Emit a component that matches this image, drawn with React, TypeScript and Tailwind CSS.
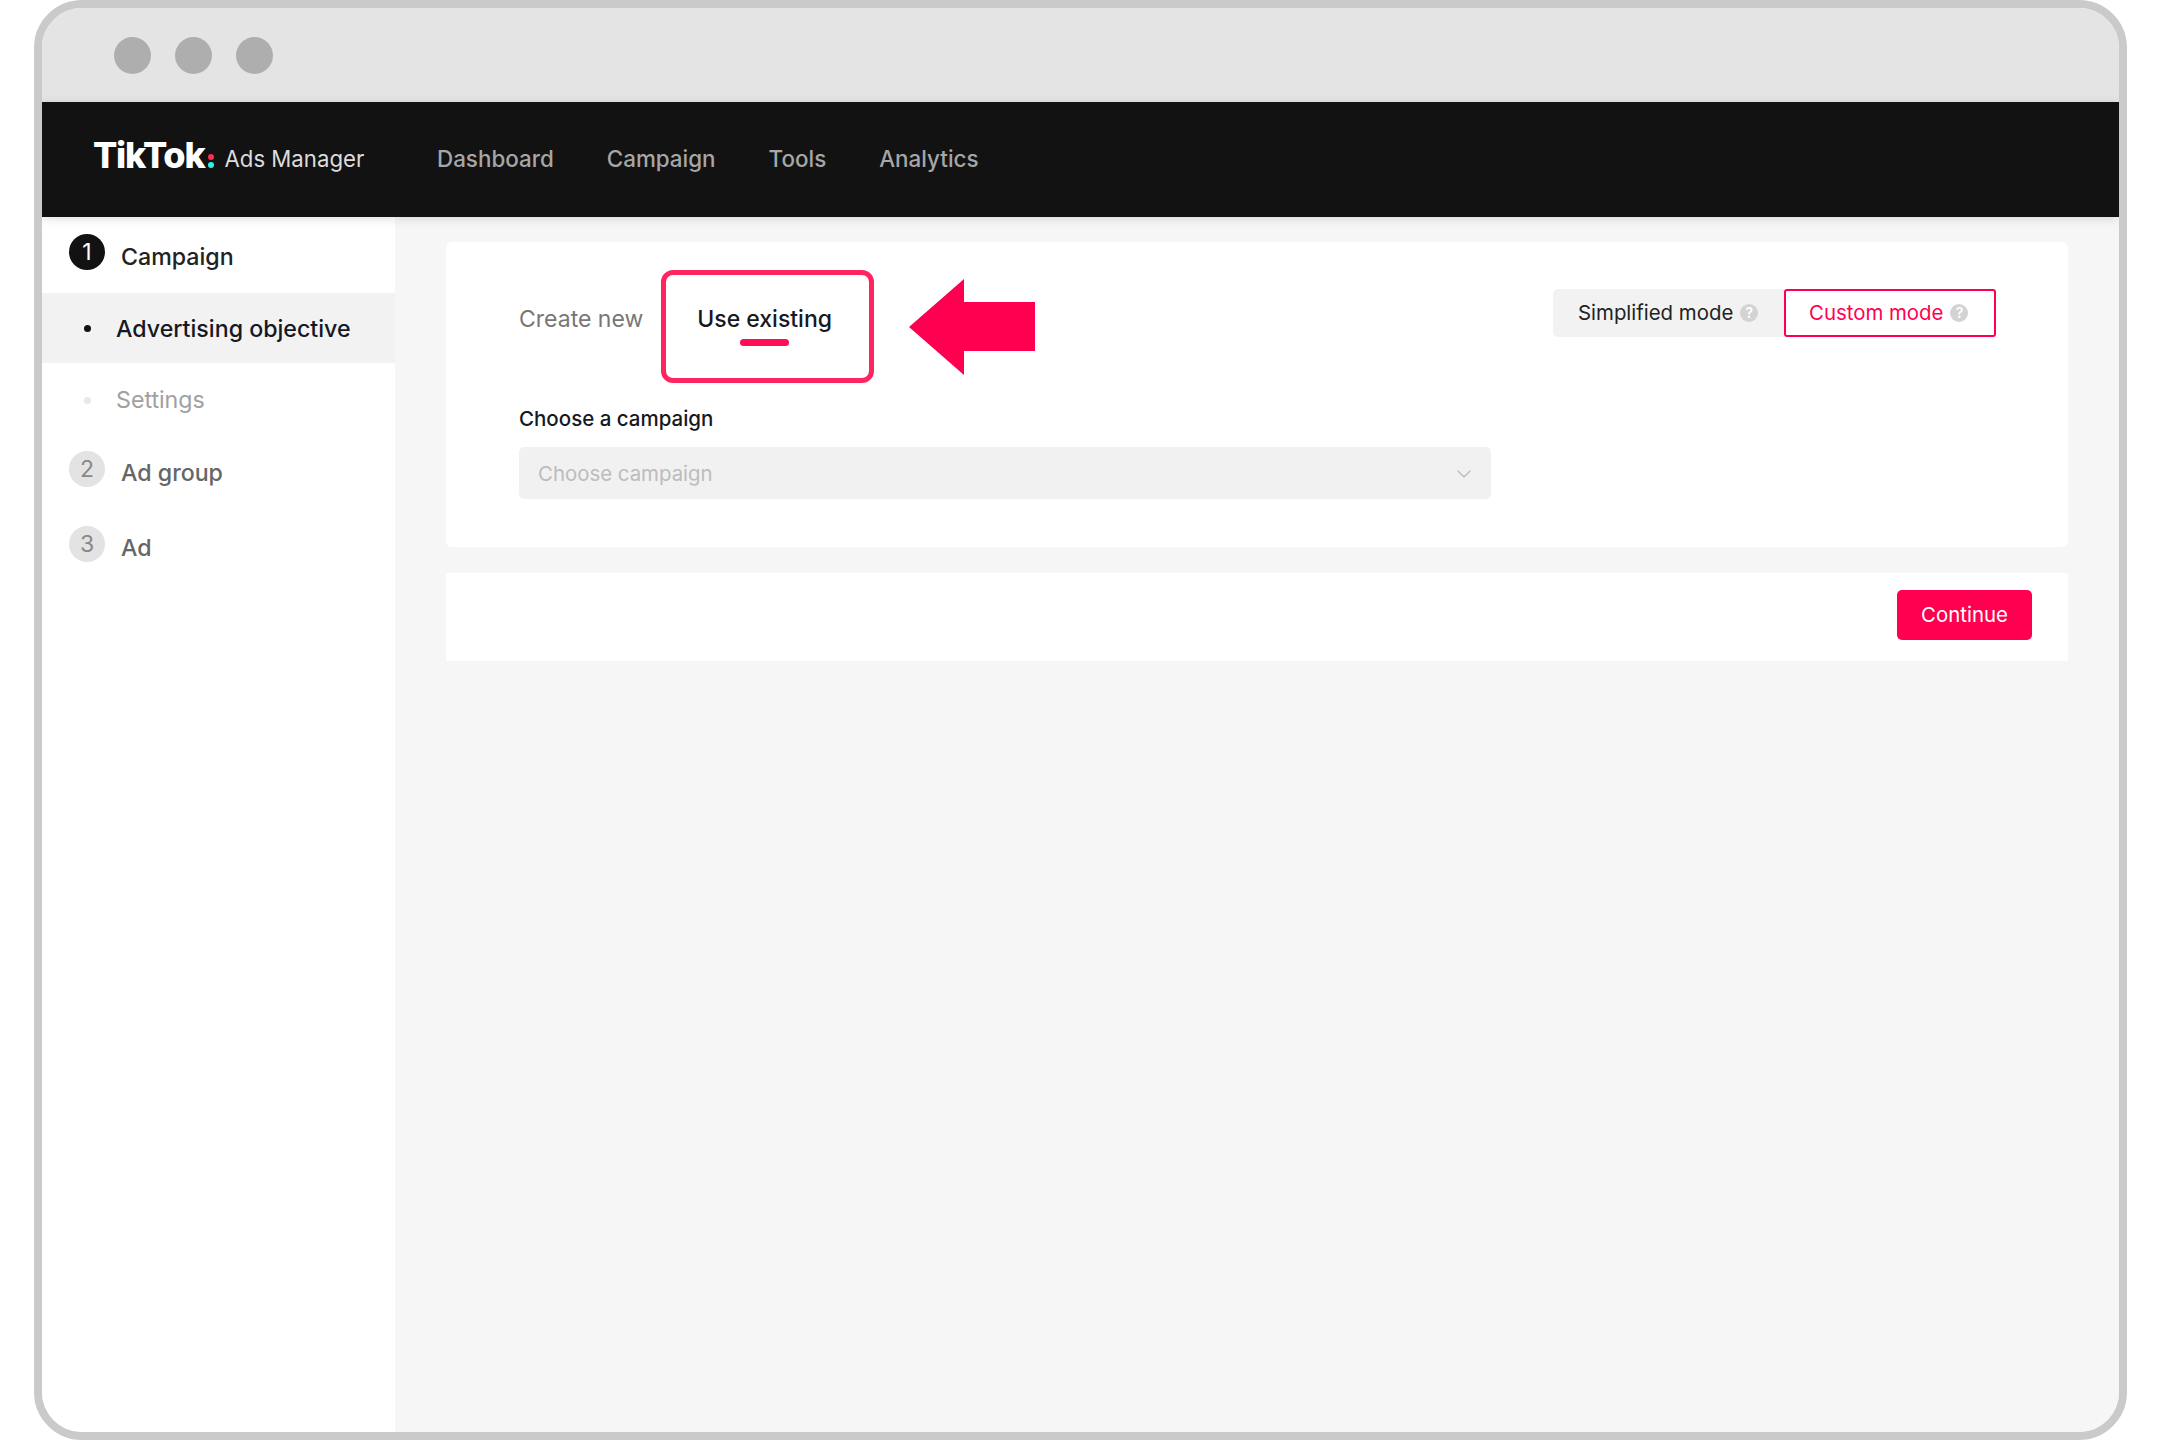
import { ChevronDown } from "lucide-react"

const NAV = ["Dashboard", "Campaign", "Tools", "Analytics"]

function Help() {
    return (
        <span className="flex h-[18px] w-[18px] shrink-0 items-center justify-center rounded-full bg-[#d3d3d3] text-[14px] font-semibold leading-none text-white">
            ?
        </span>
    )
}

function Step({ n, label, active, className }: { n: number; label: string; active?: boolean; className: string }) {
    return (
        <div className={`flex gap-[16px] pl-[27px] ${className}`}>
            <span
                className={`flex h-[36px] w-[36px] items-center justify-center rounded-full text-[23px] leading-none ${
                    active ? "mt-[17px] bg-[#121212] text-white" : "mt-[14px] bg-[#e3e3e3] text-[#888888]"
                }`}
            >
                {n}
            </span>
            <span className={`text-[23.2px] font-medium leading-[32px] ${active ? "mt-[24px] text-[#222222]" : "mt-[20px] text-[#666666]"}`}>
                {label}
            </span>
        </div>
    )
}

function SubStep({ label, active, className }: { label: string; active?: boolean; className: string }) {
    return (
        <div className={`flex items-center pl-[42px] ${className}`}>
            <span className={`h-[7px] w-[7px] rounded-full ${active ? "bg-[#121212]" : "bg-[#e8e8e8]"}`} />
            <span className={`ml-[25px] text-[23.2px] leading-[32px] ${active ? "mt-[2px] font-medium text-[#161823]" : "text-[#a0a0a0]"}`}>{label}</span>
        </div>
    )
}

export default function App() {
    return (
        <div className="h-[1440px] w-[2160px] bg-white pl-[34px] pr-[33px] font-['Inter',sans-serif]">
            <div className="flex h-full flex-col overflow-hidden rounded-[48px] border-8 border-[#cacaca] bg-white">
                {/* Window title bar */}
                <div className="flex h-[94px] shrink-0 items-start gap-[24px] bg-[#e4e4e4] pl-[72px] pt-[29px]">
                    <span className="h-[37px] w-[37px] rounded-full bg-[#aeaeae]" />
                    <span className="h-[37px] w-[37px] rounded-full bg-[#aeaeae]" />
                    <span className="h-[37px] w-[37px] rounded-full bg-[#aeaeae]" />
                </div>

                {/* Top nav */}
                <div className="relative z-10 flex h-[115px] shrink-0 items-center bg-[#121212] pl-[51px] shadow-[0_2px_10px_rgba(0,0,0,0.12)]">
                    <div className="flex w-[344px] items-center">
                        <span className="-mt-[8px] text-[36px] font-extrabold leading-none tracking-[-0.035em] text-white">TikTok</span>
                        <span className="ml-[4px] flex flex-col gap-[2px] pt-[4px]">
                            <span className="h-[6px] w-[6px] rounded-full bg-[#fe2c55]" />
                            <span className="h-[6px] w-[6px] rounded-full bg-[#25f4ee]" />
                        </span>
                        <span className="-mt-[1px] ml-[10px] whitespace-nowrap text-[22.2px] text-[#dddddd]">Ads Manager</span>
                    </div>
                    <nav className="-mt-[1px] flex gap-[53px]">
                        {NAV.map((item) => (
                            <span key={item} className="text-[22.4px] font-medium text-[#a6a6a6]">
                                {item}
                            </span>
                        ))}
                    </nav>
                </div>

                <div className="flex min-h-0 flex-1">
                    {/* Steps sidebar */}
                    <aside className="w-[353px] shrink-0 bg-white">
                        <Step n={1} label="Campaign" active className="h-[76px]" />
                        <SubStep label="Advertising objective" active className="h-[70px] bg-[#f2f2f2]" />
                        <SubStep label="Settings" className="h-[74px]" />
                        <Step n={2} label="Ad group" className="h-[75px]" />
                        <Step n={3} label="Ad" className="h-[75px]" />
                    </aside>

                    <main className="flex-1 bg-[#f6f6f6] px-[51px] pt-[25px]">
                        <section className="relative h-[305px] rounded-[6px] bg-white pl-[73px] pr-[72px] pt-[47px]">
                            <div className="flex h-[116px] items-start justify-between">
                                <div className="mt-[14px] flex gap-[54px] text-[23px] leading-[32px]">
                                    <span className="text-[#777777]">Create new</span>
                                    <div className="flex flex-col items-center gap-[4px]">
                                        <span className="font-medium text-[#161823]">Use existing</span>
                                        <span className="h-[7px] w-[49px] rounded-full bg-[#ff0f55]" />
                                    </div>
                                </div>
                                <div className="flex h-[48px] text-[20.4px]">
                                    <div className="flex w-[231px] items-center gap-[7px] rounded-l-[5px] bg-[#f2f2f2] pl-[25px] text-[#222222]">
                                        Simplified mode
                                        <Help />
                                    </div>
                                    <div className="flex w-[212px] items-center gap-[7px] rounded-[3px] border-2 border-[#ff0050] pl-[23px] text-[#ff0050]">
                                        Custom mode
                                        <Help />
                                    </div>
                                </div>
                            </div>
                            <div className="text-[20.5px] font-medium leading-[28px] text-[#161823]">Choose a campaign</div>
                            <div className="mt-[14px] flex h-[52px] w-[972px] items-center justify-between rounded-[5px] bg-[#f1f1f1] pl-[19px] pr-[15px] pt-[2px] text-[20.4px] text-[#bcbcbc]">
                                Choose campaign
                                <ChevronDown className="h-[24px] w-[24px] text-[#bcbcbc]" strokeWidth={1.4} />
                            </div>

                            {/* Callout over the tab */}
                            <div className="absolute left-[215px] top-[28px] h-[113px] w-[213px] rounded-[12px] border-[5px] border-[#fe2660]" />
                            <svg className="absolute left-[463px] top-[37px]" width="126" height="96" viewBox="0 0 126 96">
                                <path d="M0 48 L55 0 V23 H126 V72 H55 V96 Z" fill="#ff0050" />
                            </svg>
                        </section>

                        <section className="mt-[26px] flex h-[88px] items-start justify-end bg-white pr-[36px] pt-[17px]">
                            <button className="h-[50px] w-[135px] rounded-[5px] bg-[#ff0050] text-[20.4px] text-white">Continue</button>
                        </section>
                    </main>
                </div>
            </div>
        </div>
    )
}
